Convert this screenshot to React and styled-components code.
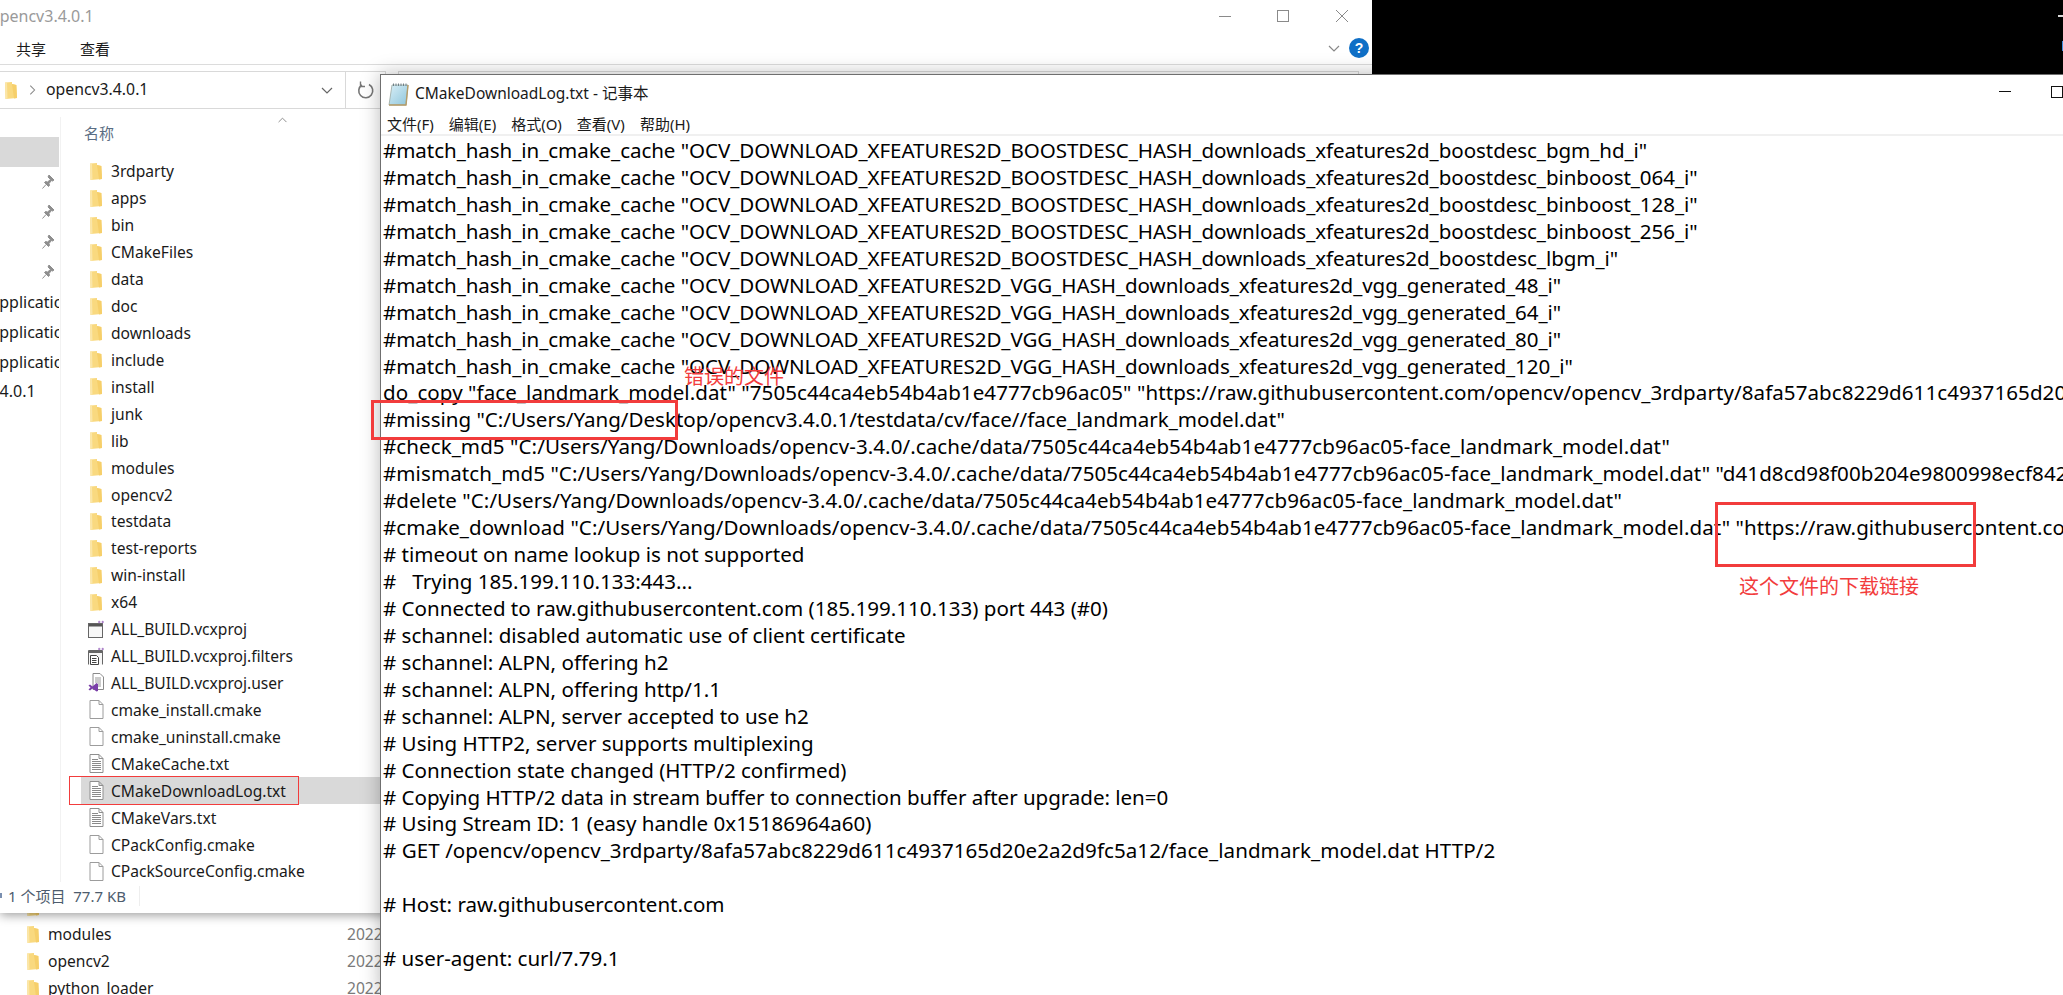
import React from "react";
import styled, { createGlobalStyle } from "styled-components";

const Global = createGlobalStyle`
  html, body { margin: 0; padding: 0; background: #fff; }
  #root { width: 2063px; height: 995px; }
`;

const uiFont = `"Noto Sans", "Noto Sans CJK SC", sans-serif`;

const Desktop = styled.div`
  position: relative;
  width: 2063px;
  height: 995px;
  overflow: hidden;
  background: #fff;
  font-family: ${uiFont};
  color: #1a1a1a;
`;

const BackWindow = styled.div`
  position: absolute;
  left: 0;
  top: 894px;
  width: 380px;
  height: 101px;
  padding-left: 26px;
  box-sizing: border-box;
`;

const BlackBar = styled.div`
  position: absolute;
  left: 1372px;
  top: 0;
  right: 0;
  height: 74px;
  background: #000;
`;

const BlackMark = styled.div`
  position: absolute;
  right: 0;
  top: ${(p) => p.$top}px;
  width: ${(p) => p.$w}px;
  height: ${(p) => p.$h}px;
  background: ${(p) => p.$color};
`;

const Explorer = styled.div`
  position: absolute;
  left: 0;
  top: 0;
  width: 1372px;
  height: 913px;
  background: #fff;
  display: flex;
  flex-direction: column;
  box-shadow: 0 2px 10px rgba(0, 0, 0, 0.4);
  overflow: hidden;
`;

const TitleBar = styled.div`
  height: 32px;
  display: flex;
  align-items: center;
  justify-content: space-between;
  flex: none;
`;

const ClippedTitle = styled.div`
  margin-left: -10px;
  font-size: 16px;
  color: #9a9a9a;
`;

const WinControls = styled.div`
  display: flex;
  align-items: center;
  gap: 46px;
  margin-right: 23px;
  color: #8a8a8a;
`;

const Ribbon = styled.div`
  height: 33px;
  flex: none;
  display: flex;
  align-items: center;
  gap: 34px;
  padding: 0 3px 0 16px;
  border-bottom: 1px solid #dcdcdc;
  font-size: 15px;
  box-sizing: border-box;
`;

const RibbonEnd = styled.div`
  margin-left: auto;
  display: flex;
  align-items: center;
  gap: 8px;
  color: #888;
`;

const HelpBadge = styled.div`
  width: 20px;
  height: 20px;
  border-radius: 50%;
  background: #0f6fc6;
  color: #fff;
  font: bold 14px "Liberation Sans", sans-serif;
  display: flex;
  align-items: center;
  justify-content: center;
`;

const AddressRow = styled.div`
  height: 38px;
  margin-top: 6px;
  flex: none;
  display: flex;
  gap: 12px;
`;

const AddressBox = styled.div`
  width: 386px;
  height: 38px;
  flex: none;
  display: flex;
  align-items: center;
  box-sizing: border-box;
  border: 1px solid #d9d9d9;
  border-left: none;
  font-size: 15.8px;
  padding-left: 4px;
`;

const AddressLabel = styled.span`
  margin-top: -2px;
`;

const Crumb = styled.span`
  margin: 0 8px;
  color: #888;
  display: flex;
`;

const AddressEnd = styled.div`
  margin-left: auto;
  display: flex;
  align-items: center;
  height: 100%;
`;

const DropArrow = styled.div`
  width: 36px;
  display: flex;
  justify-content: center;
  color: #666;
`;

const Refresh = styled.div`
  width: 39px;
  height: 100%;
  border-left: 1px solid #d9d9d9;
  display: flex;
  align-items: center;
  justify-content: center;
  color: #777;
`;

const SearchBox = styled.div`
  flex: 0 0 961px;
  height: 38px;
  box-sizing: border-box;
  border: 1px solid #d9d9d9;
`;

const Body = styled.div`
  flex: 1;
  min-height: 0;
  display: flex;
  margin-top: 8px;
`;

const NavPane = styled.div`
  width: 61px;
  flex: none;
  padding-top: 20px;
  box-sizing: border-box;
  border-right: 1px solid #f2f2f2;
  overflow: hidden;
`;

const NavItem = styled.div`
  height: 30px;
  width: 59px;
  display: flex;
  align-items: center;
  justify-content: flex-end;
  padding-right: 4px;
  box-sizing: border-box;
  color: #888;
  background: ${(p) => (p.$selected ? "#d9d9d9" : "transparent")};
`;

const NavText = styled.div`
  height: 29px;
  width: 59px;
  overflow: hidden;
  white-space: nowrap;
  font-size: 16px;
  line-height: 29px;
  text-indent: ${(p) => p.$indent}px;
  margin-top: ${(p) => p.$top || 0}px;
`;

const FileArea = styled.div`
  flex: 1;
  min-width: 0;
  display: flex;
  flex-direction: column;
  overflow: hidden;
`;

const HeaderRow = styled.div`
  position: relative;
  height: 41px;
  flex: none;
  padding: 3px 0 0 23px;
  box-sizing: border-box;
  display: flex;
  align-items: flex-start;
  font-size: 15px;
  color: #5a6d83;
  line-height: 27px;
`;

const SortCaret = styled.span`
  position: absolute;
  left: 216px;
  top: -2px;
  color: #888;
  display: flex;
`;

const Row = styled.div`
  height: 26.93px;
  flex: none;
  display: flex;
  align-items: center;
  margin-left: 20px;
  padding-left: 8px;
  gap: 8px;
  font-size: 15.6px;
  white-space: nowrap;
  background: ${(p) => (p.$selected ? "#d9d9d9" : "transparent")};
`;

const IconSlot = styled.span`
  flex: 0 0 14px;
  width: 14px;
  min-width: 0;
  display: flex;
  justify-content: ${(p) => (p.$wide ? "center" : "flex-start")};

  svg {
    flex: none;
  }
`;

const StatusBar = styled.div`
  height: 27px;
  flex: none;
  margin-top: auto;
  margin-bottom: 4px;
  display: flex;
  align-items: center;
  gap: 6px;
  font-size: 15px;
  color: #4d5c6e;
`;

const StatusDot = styled.span`
  width: 2px;
  height: 5px;
  background: #7a8fb0;
`;

const StatusSep = styled.div`
  width: 1px;
  height: 20px;
  background: #eee;
  margin-left: 7px;
`;

const BackRow = styled.div`
  height: 26.93px;
  display: flex;
  align-items: center;
  gap: 8px;
  font-size: 15.6px;
`;

const BackDate = styled.span`
  margin-left: auto;
  width: 33px;
  overflow: hidden;
  color: #7a7a7a;
`;

const Notepad = styled.div`
  position: absolute;
  left: 380px;
  top: 74px;
  right: -20px;
  bottom: 0;
  background: #fff;
  border-left: 1px solid #6f6f6f;
  border-top: 1px solid #6f6f6f;
  box-sizing: border-box;
  display: flex;
  flex-direction: column;
  box-shadow: 0 0 18px rgba(0, 0, 0, 0.28);
`;

const NpTitle = styled.div`
  height: 38px;
  flex: none;
  display: flex;
  align-items: center;
  padding-left: 7px;
  gap: 6px;
  font-size: 15.5px;
  color: #1a1a1a;
`;

const NpTitleText = styled.span`
  margin-top: -3px;
`;

const NpControls = styled.div`
  margin-left: auto;
  margin-right: 20px;
  display: flex;
  align-items: center;
  gap: 40px;
  margin-top: -5px;
`;

const NpMin = styled.div`
  width: 12px;
  height: 1px;
  background: #111;
`;

const NpMax = styled.div`
  width: 12px;
  height: 12px;
  border: 1px solid #111;
  box-sizing: border-box;
`;

const NpMenu = styled.div`
  height: 23px;
  flex: none;
  display: flex;
  align-items: center;
  gap: 15px;
  padding-left: 6px;
  font-size: 15px;
  border-bottom: 2px solid #f0f0f0;
  box-sizing: border-box;
`;

const NpText = styled.div`
  flex: 1;
  min-height: 0;
  overflow: hidden;
  padding: 1px 0 0 2px;
  font-family: "Noto Sans", "Noto Sans CJK SC", sans-serif;
  font-size: 20.55px;
  line-height: 26.93px;
  color: #000;
  white-space: pre;
`;

const NpLine = styled.div`
  letter-spacing: ${(p) => p.$track}px;
`;

const RedBox = styled.div`
  position: absolute;
  left: ${(p) => p.$x}px;
  top: ${(p) => p.$y}px;
  width: ${(p) => p.$w}px;
  height: ${(p) => p.$h}px;
  box-sizing: border-box;
  border: ${(p) => p.$t}px solid #f23c3c;
`;

const RedNote = styled.div`
  position: absolute;
  left: ${(p) => p.$x}px;
  top: ${(p) => p.$y}px;
  font-size: 20px;
  line-height: 28px;
  color: #f23c3c;
  font-family: "Noto Sans CJK SC", sans-serif;
  white-space: nowrap;
`;

const Folder = () => (
  <svg width="14" height="19" viewBox="0 0 14 19">
    <path d="M1 1.5 L8 1 L8 3 L12 4 L13 17 L1.5 18 Z" fill="#f9d97f" />
    <path d="M1 2 L3 1.5 L3.5 17.5 L1.5 18 Z" fill="#fbe6a8" />
    <path d="M8 3 L12.5 4 L13 17 L10 17.5 Z" fill="#f6cf6a" />
  </svg>
);

const BlankFile = () => (
  <svg width="15" height="19" viewBox="0 0 15 19">
    <path d="M1 .5 H10 L14 4.5 V18.5 H1 Z M10 .5 V4.5 H14" fill="#fff" stroke="#9c9c9c" />
  </svg>
);

const TextFile = () => (
  <svg width="15" height="19" viewBox="0 0 15 19">
    <path d="M1 .5 H10 L14 4.5 V18.5 H1 Z M10 .5 V4.5 H14" fill="#fff" stroke="#8f8f8f" />
    <path d="M3 5.5H9M3 7.5H12M3 9.5H12M3 11.5H12M3 13.5H12M3 15.5H12" stroke="#8a8a8a" />
  </svg>
);

const VcxProj = () => (
  <svg width="17" height="19" viewBox="0 0 17 19">
    <rect x=".5" y="3.5" width="14" height="14" fill="#f7f7f7" stroke="#666" />
    <rect x="1" y="4" width="13" height="2.5" fill="#555" />
    <path d="M10 2h2.5M11.2 .8v2.4M13.5 2h2.5M14.7 .8v2.4" stroke="#a678c4" />
  </svg>
);

const VcxFilter = () => (
  <svg width="17" height="19" viewBox="0 0 17 19">
    <path d="M.5 17.5 V3.5 H14.5 V17.5" fill="#f7f7f7" stroke="#666" />
    <rect x="1" y="4" width="13" height="2" fill="#666" />
    <path d="M2.5 8.5h6l2 2v7h-8zM4 11.5h4.5M4 13.5h4.5M4 15.5h4.5" fill="#fff" stroke="#444" />
    <path d="M10 2h2.5M11.2 .8v2.4M13.5 2h2.5M14.7 .8v2.4" stroke="#a678c4" />
  </svg>
);

const VcxUser = () => (
  <svg width="17" height="19" viewBox="0 0 17 19">
    <path d="M5 .5 H12 L15.5 4 V16.5 H5 Z" fill="#fff" stroke="#8a8a8a" />
    <path d="M7 5h6M7 7h6M7 9h6M10 11h3M10 13h3" stroke="#999" />
    <path d="M0.5 12.5 L2 11.5 L4.5 13.5 L8.5 10 L10 11 V18 L8.5 18.5 L4.5 15.5 L2 17.5 L.5 16.5 L2.5 14.5 Z" fill="#7a3fa8" />
  </svg>
);

const Pin = () => (
  <svg width="14" height="16" viewBox="0 0 14 16">
    <path d="M8 1 L13 6 L11.5 7 L10.5 6.5 L8 9.5 L8.5 11.5 L7.5 12.5 L3.5 8.5 L4.5 7.5 L6.5 8 L9.5 5.5 L7 3 Z M5 10.5 L1.5 14.5" fill="#8e8e8e" stroke="#8e8e8e" />
  </svg>
);

const Chevron = ({ dir = "down", size = 14 }) => {
  const d = {
    down: "M2 5 L7 10 L12 5",
    up: "M2 9 L7 4 L12 9",
    right: "M5 2 L10 7 L5 12",
  }[dir];
  return (
    <svg width={size} height={size} viewBox="0 0 14 14">
      <path d={d} fill="none" stroke="currentColor" strokeWidth="1.2" />
    </svg>
  );
};

const CloseGlyph = () => (
  <svg width="14" height="14" viewBox="0 0 14 14">
    <path d="M1 1 L13 13 M13 1 L1 13" stroke="currentColor" />
  </svg>
);

const MinGlyph = () => (
  <svg width="12" height="12" viewBox="0 0 12 12">
    <path d="M0 6.5 H12" stroke="currentColor" />
  </svg>
);

const MaxGlyph = () => (
  <svg width="12" height="12" viewBox="0 0 12 12">
    <rect x=".5" y=".5" width="11" height="11" fill="none" stroke="currentColor" />
  </svg>
);

const RefreshGlyph = () => (
  <svg width="18" height="20" viewBox="0 0 18 20">
    <path d="M12 4.5 A7 7 0 1 1 5 4.8" fill="none" stroke="currentColor" strokeWidth="1.6" />
    <path d="M3.5 1.5 V6.5 H8" fill="none" stroke="currentColor" strokeWidth="1.4" />
  </svg>
);

const NotepadIcon = () => (
  <svg width="21" height="25" viewBox="0 0 21 25">
    <defs>
      <linearGradient id="npg" x1="0" y1="0" x2="1" y2="1">
        <stop offset="0" stopColor="#d8eef6" />
        <stop offset="1" stopColor="#8fc6dc" />
      </linearGradient>
    </defs>
    <path d="M4 3 H20 L18 23 H1 Z" fill="url(#npg)" stroke="#9aa79f" strokeWidth=".8" />
    <path d="M20 3 L18 23 H1" fill="none" stroke="#b69c68" strokeWidth="1.4" />
    <path d="M5.5 4V1.5M8 4V1.5M10.5 4V1.5M13 4V1.5M15.5 4V1.5M18 4V1.5" stroke="#6f7f86" />
  </svg>
);

const files = [
  ["3rdparty", Folder], ["apps", Folder], ["bin", Folder], ["CMakeFiles", Folder],
  ["data", Folder], ["doc", Folder], ["downloads", Folder], ["include", Folder],
  ["install", Folder], ["junk", Folder], ["lib", Folder], ["modules", Folder],
  ["opencv2", Folder], ["testdata", Folder], ["test-reports", Folder], ["win-install", Folder],
  ["x64", Folder], ["ALL_BUILD.vcxproj", VcxProj], ["ALL_BUILD.vcxproj.filters", VcxFilter],
  ["ALL_BUILD.vcxproj.user", VcxUser], ["cmake_install.cmake", BlankFile],
  ["cmake_uninstall.cmake", BlankFile], ["CMakeCache.txt", TextFile],
  ["CMakeDownloadLog.txt", TextFile], ["CMakeVars.txt", TextFile],
  ["CPackConfig.cmake", BlankFile], ["CPackSourceConfig.cmake", BlankFile],
];

const M = "#match_hash_in_cmake_cache \"OCV_DOWNLOAD_XFEATURES2D_";
const C = "C:/Users/Yang/Downloads/opencv-3.4.0/.cache/data/7505c44ca4eb54b4ab1e4777cb96ac05-face_landmark_model.dat";
const U = "https://raw.githubusercontent.com/opencv/opencv_3rdparty/8afa57abc8229d611c4937165d20e2a2d9fc5a12/face_landmark_model.dat";
const lines = [
  [M + "BOOSTDESC_HASH_downloads_xfeatures2d_boostdesc_bgm_hd_i\"", -0.06],
  [M + "BOOSTDESC_HASH_downloads_xfeatures2d_boostdesc_binboost_064_i\"", -0.06],
  [M + "BOOSTDESC_HASH_downloads_xfeatures2d_boostdesc_binboost_128_i\"", -0.06],
  [M + "BOOSTDESC_HASH_downloads_xfeatures2d_boostdesc_binboost_256_i\"", -0.06],
  [M + "BOOSTDESC_HASH_downloads_xfeatures2d_boostdesc_lbgm_i\"", -0.06],
  [M + "VGG_HASH_downloads_xfeatures2d_vgg_generated_48_i\"", -0.06],
  [M + "VGG_HASH_downloads_xfeatures2d_vgg_generated_64_i\"", -0.06],
  [M + "VGG_HASH_downloads_xfeatures2d_vgg_generated_80_i\"", -0.06],
  [M + "VGG_HASH_downloads_xfeatures2d_vgg_generated_120_i\"", -0.06],
  [`do_copy "face_landmark_model.dat" "7505c44ca4eb54b4ab1e4777cb96ac05" "${U}"`, 0.07],
  [`#missing "C:/Users/Yang/Desktop/opencv3.4.0.1/testdata/cv/face//face_landmark_model.dat"`, 0],
  [`#check_md5 "${C}"`, 0.07],
  [`#mismatch_md5 "${C}" "d41d8cd98f00b204e9800998ecf8427e"`, 0.07],
  [`#delete "${C}"`, 0.07],
  [`#cmake_download "${C}" "${U}"`, 0.07],
  ["# timeout on name lookup is not supported", 0],
  ["#   Trying 185.199.110.133:443...", 0],
  ["# Connected to raw.githubusercontent.com (185.199.110.133) port 443 (#0)", 0],
  ["# schannel: disabled automatic use of client certificate", 0],
  ["# schannel: ALPN, offering h2", 0],
  ["# schannel: ALPN, offering http/1.1", 0],
  ["# schannel: ALPN, server accepted to use h2", 0],
  ["# Using HTTP2, server supports multiplexing", 0],
  ["# Connection state changed (HTTP/2 confirmed)", 0],
  ["# Copying HTTP/2 data in stream buffer to connection buffer after upgrade: len=0", -0.03],
  ["# Using Stream ID: 1 (easy handle 0x15186964a60)", 0],
  ["# GET /opencv/opencv_3rdparty/8afa57abc8229d611c4937165d20e2a2d9fc5a12/face_landmark_model.dat HTTP/2", 0.065],
  [" ", 0],
  ["# Host: raw.githubusercontent.com", 0],
  [" ", 0],
  ["# user-agent: curl/7.79.1", 0],
];

export default function App() {
  return (
    <Desktop>
      <Global />
      <BackWindow>
        {["include", "modules", "opencv2", "python_loader"].map((name) => (
          <BackRow key={name}>
            <Folder />
            {name}
            <BackDate>2022</BackDate>
          </BackRow>
        ))}
      </BackWindow>
      <BlackBar>
        <BlackMark $top={15} $w={5} $h={2} $color="#d8d8d8" />
        <BlackMark $top={41} $w={1} $h={10} $color="#3f8fe0" />
      </BlackBar>
      <Explorer>
        <TitleBar>
          <ClippedTitle>opencv3.4.0.1</ClippedTitle>
          <WinControls>
            <MinGlyph />
            <MaxGlyph />
            <CloseGlyph />
          </WinControls>
        </TitleBar>
        <Ribbon>
          <span>共享</span>
          <span>查看</span>
          <RibbonEnd>
            <Chevron />
            <HelpBadge>?</HelpBadge>
          </RibbonEnd>
        </Ribbon>
        <AddressRow>
          <AddressBox>
            <Folder />
            <Crumb>
              <Chevron dir="right" size={12} />
            </Crumb>
            <AddressLabel>opencv3.4.0.1</AddressLabel>
            <AddressEnd>
              <DropArrow>
                <Chevron />
              </DropArrow>
              <Refresh>
                <RefreshGlyph />
              </Refresh>
            </AddressEnd>
          </AddressBox>
          <SearchBox />
        </AddressRow>
        <Body>
          <NavPane>
            <NavItem $selected />
            <NavItem><Pin /></NavItem>
            <NavItem><Pin /></NavItem>
            <NavItem><Pin /></NavItem>
            <NavItem><Pin /></NavItem>
            <NavText $indent={-11} $top={1}>Applications</NavText>
            <NavText $indent={-11} $top={1}>Applications</NavText>
            <NavText $indent={-11} $top={1}>Applications</NavText>
            <NavText $indent={-22} $top={0}>v3.4.0.1</NavText>
          </NavPane>
          <FileArea>
            <HeaderRow>
              名称
              <SortCaret>
                <Chevron dir="up" size={11} />
              </SortCaret>
            </HeaderRow>
            {files.map(([name, Icon]) => (
              <Row key={name} $selected={name === "CMakeDownloadLog.txt"}>
                <IconSlot $wide={name.startsWith("ALL_BUILD")}>
                  <Icon />
                </IconSlot>
                {name}
              </Row>
            ))}
          </FileArea>
        </Body>
        <StatusBar>
          <StatusDot />
          1 个项目&nbsp;&nbsp;77.7 KB
          <StatusSep />
        </StatusBar>
      </Explorer>
      <Notepad>
        <NpTitle>
          <NotepadIcon />
          <NpTitleText>CMakeDownloadLog.txt - 记事本</NpTitleText>
          <NpControls>
            <NpMin />
            <NpMax />
          </NpControls>
        </NpTitle>
        <NpMenu>
          <span>文件(F)</span>
          <span>编辑(E)</span>
          <span>格式(O)</span>
          <span>查看(V)</span>
          <span>帮助(H)</span>
        </NpMenu>
        <NpText>
          {lines.map(([text, track], i) => (
            <NpLine key={i} $track={track}>{text}</NpLine>
          ))}
        </NpText>
      </Notepad>
      <RedBox $x={69} $y={776} $w={230} $h={29} $t={1} />
      <RedBox $x={371} $y={400} $w={307} $h={40} $t={3} />
      <RedBox $x={1715} $y={502} $w={261} $h={65} $t={3} />
      <RedNote $x={684} $y={362}>错误的文件</RedNote>
      <RedNote $x={1739} $y={572}>这个文件的下载链接</RedNote>
    </Desktop>
  );
}
